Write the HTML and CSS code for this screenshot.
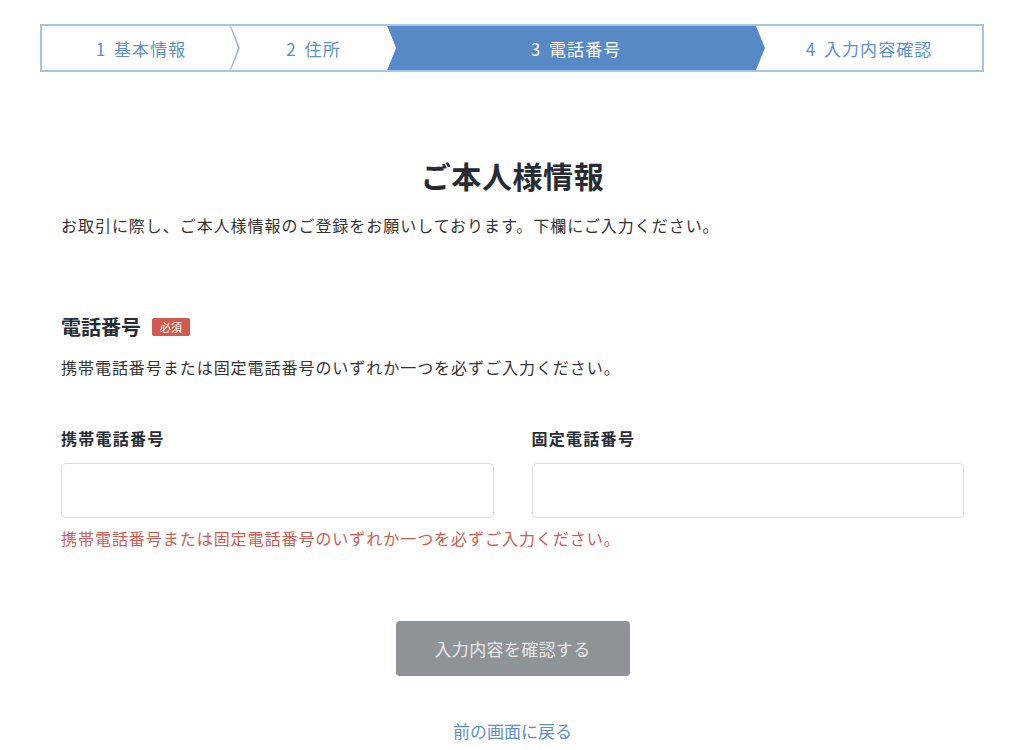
FILE: index.html
```html
<!DOCTYPE html>
<html lang="ja">
<head>
    <meta charset="UTF-8">
    <meta name="viewport" content="width=device-width, initial-scale=1.0">
    <title>ご本人様情報 - 電話番号</title>
    <link rel="stylesheet" href="styles.css">
</head>
<body>

    <div class="page">
        <!-- Progress steps -->
        <ol class="stepper">
            <li class="step step-1">1 基本情報</li>
            <li class="step step-2 before-current">2 住所</li>
            <li class="step step-3 current">3 電話番号</li>
            <li class="step step-4 last">4 入力内容確認</li>
        </ol>

        <div class="content">
            <h1 class="page-title">ご本人様情報</h1>
            <p class="lead">お取引に際し、ご本人様情報のご登録をお願いしております。下欄にご入力ください。</p>

            <!-- Phone section -->
            <section class="form-section">
                <h2 class="section-title">電話番号 <span class="badge">必須</span></h2>
                <p class="section-note">携帯電話番号または固定電話番号のいずれか一つを必ずご入力ください。</p>

                <div class="fields">
                    <div class="field">
                        <label for="mobile">携帯電話番号</label>
                        <input type="tel" id="mobile">
                    </div>
                    <div class="field">
                        <label for="landline">固定電話番号</label>
                        <input type="tel" id="landline">
                    </div>
                </div>
                <p class="error">携帯電話番号または固定電話番号のいずれか一つを必ずご入力ください。</p>
            </section>

            <!-- Actions -->
            <div class="actions">
                <button class="confirm-btn" disabled>入力内容を確認する</button>
                <a href="#" class="back-link">前の画面に戻る</a>
            </div>
        </div>
    </div>

</body>
</html>
```

FILE: styles.css
```css
body {
    margin: 0;
    font-family: "Noto Sans CJK JP", "Noto Sans", sans-serif;
    color: #333;
    background: #fff;
}

.page {
    width: 944px;
    padding: 24px 40px 0;
}

/* ---- stepper ---- */

.stepper {
    display: flex;
    margin: 0;
    padding: 0;
    list-style: none;
    height: 44px;
    border: 2px solid #a6c3e8;
}

.step {
    position: relative;
    display: flex;
    align-items: center;
    justify-content: center;
    margin-left: -9px;
    background: #fff;
    color: #5b8fd0;
    font-size: 17px;
    letter-spacing: 0.06em;
    word-spacing: 3px;
    clip-path: polygon(0 0, calc(100% - 9px) 0, 100% 50%, calc(100% - 9px) 100%, 0 100%, 9px 50%);
}

.step::after {
    content: "";
    position: absolute;
    top: 0;
    right: 0;
    width: 10px;
    height: 100%;
    background: #8fb2e0;
    clip-path: polygon(0 0, 2px 0, 100% 50%, 2px 100%, 0 100%, 8px 50%);
}

.step-1 {
    width: 198px;
    margin-left: 0;
    z-index: 4;
    clip-path: polygon(0 0, calc(100% - 9px) 0, 100% 50%, calc(100% - 9px) 100%, 0 100%);
}

.step-2 {
    width: 165px;
    z-index: 3;
}

.step-3 {
    width: 378px;
    z-index: 2;
}

.step-4 {
    flex: 1;
    z-index: 1;
    clip-path: polygon(0 0, 100% 0, 100% 100%, 0 100%, 9px 50%);
}

.step.before-current::after,
.step.current::after,
.step.last::after {
    display: none;
}

.step.current {
    background: #5889c7;
    color: #fff;
}

/* ---- content ---- */

.content {
    padding: 0 20px 0 21px;
}

.page-title {
    margin: 84px 0 0;
    font-size: 30px;
    line-height: 39px;
    font-weight: 700;
    letter-spacing: 0.02em;
    text-align: center;
    color: #272b33;
}

.lead {
    margin: 18px 0 0;
    font-size: 16px;
    line-height: 24px;
    letter-spacing: 0.06em;
}

.section-title {
    display: flex;
    align-items: center;
    margin: 76px 0 0;
    font-size: 20px;
    line-height: 28px;
    font-weight: 700;
    color: #272b33;
}

.badge {
    margin-left: 11px;
    width: 38px;
    height: 18px;
    line-height: 18px;
    border-radius: 2px;
    background: #cf5a4f;
    color: #fff;
    font-size: 11px;
    font-weight: 400;
    text-align: center;
}

.section-note {
    margin: 14px 0 0;
    font-size: 16px;
    line-height: 24px;
    letter-spacing: 0.06em;
}

.fields {
    display: grid;
    grid-template-columns: 1fr 1fr;
    gap: 38px;
    margin-top: 47px;
}

.field label {
    display: block;
    font-size: 16px;
    line-height: 24px;
    font-weight: 700;
    color: #272b33;
    letter-spacing: 0.08em;
}

.field input {
    display: block;
    box-sizing: border-box;
    width: 100%;
    height: 55px;
    margin-top: 13px;
    border: 1px solid #dcdcdc;
    border-radius: 5px;
    background: #fff;
}

.error {
    margin: 8px 0 0;
    font-size: 16px;
    line-height: 24px;
    letter-spacing: 0.06em;
    color: #d25a50;
}

.actions {
    display: flex;
    flex-direction: column;
    align-items: center;
    margin-top: 71px;
}

.confirm-btn {
    width: 234px;
    height: 55px;
    border: none;
    border-radius: 4px;
    background: #8e9397;
    color: #e8e8e8;
    font-family: inherit;
    font-size: 17px;
    letter-spacing: 0.02em;
}

.back-link {
    margin-top: 43px;
    font-size: 17px;
    line-height: 24px;
    color: #5b8fd0;
    text-decoration: none;
}
```
